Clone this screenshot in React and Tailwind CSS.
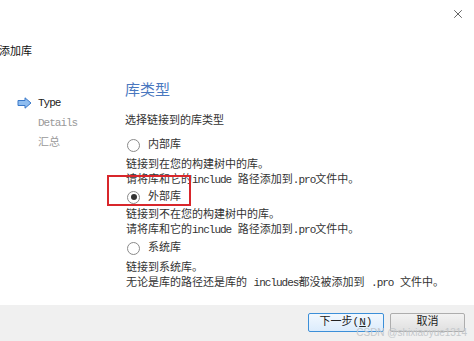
import { X } from 'lucide-react'

const font = { fontFamily: '"Liberation Mono", "Noto Sans CJK SC", monospace' }

// Latin runs in the reference are half-width (SimSun style), so squeeze the mono a little
function Latin({ children }) {
  return <span className="tracking-[-1px]">{children}</span>
}

function Radio({ checked, label }) {
  return (
    <div className="flex h-[16px] items-center gap-[8px]">
      <span className="ml-[2px] flex h-[13px] w-[13px] items-center justify-center rounded-full border border-[#8a8a8a] bg-white">
        {checked && <span className="h-[6px] w-[6px] rounded-full bg-[#333]" />}
      </span>
      <span className="text-[11px] text-[#333]">{label}</span>
    </div>
  )
}

function NavArrow() {
  return (
    <svg width="15" height="12" viewBox="0 0 15 12" className="shrink-0">
      <path d="M1 3.5 H8 V0.8 L14 6 L8 11.2 V8.5 H1 Z" fill="#8fbdf0" stroke="#3a78c8" strokeWidth="1" strokeLinejoin="round" />
    </svg>
  )
}

export default function App() {
  return (
    <div className="relative flex h-[341px] w-[474px] flex-col overflow-hidden bg-white" style={font}>
      <div className="flex h-[30px] justify-end pr-[9px] pt-[7px]">
        <X size={14} strokeWidth={1.3} className="text-[#333]" />
      </div>
      <div className="-ml-[1px] mt-[15px] h-[14px] text-[11px] leading-[14px] text-[#111]">添加库</div>

      <div className="flex flex-1 pt-[33px]">
        <div className="w-[125px] shrink-0 pl-[17px] pt-[1px] text-[11px] leading-[20px]">
          <div className="flex items-center gap-[6px] text-[#222]">
            <NavArrow />
            <Latin>Type</Latin>
          </div>
          <div className="pl-[21px] text-[#9a9a9a]"><Latin>Details</Latin></div>
          <div className="pl-[21px] text-[#9a9a9a]">汇总</div>
        </div>

        <div className="-mt-[10px] flex-1 text-[11px] leading-[15px] text-[#333]">
          <div className="h-[20px] text-[15px] leading-[20px] text-[#4a78bf]">库类型</div>
          <div className="mt-[12px]">选择链接到的库类型</div>

          <div className="mt-[8px]">
            <Radio label="内部库" />
          </div>
          <div className="mt-[5px] pl-[1px]">
            <div>链接到在您的构建树中的库。</div>
            <div>请将库和它的<Latin>include</Latin> 路径添加到<Latin>.pro</Latin>文件中。</div>
          </div>

          <div className="relative mt-[1px]">
            <Radio checked label="外部库" />
            <div className="absolute -left-[18px] -top-[14px] h-[31px] w-[84px] border-2 border-[#d8262b]" />
          </div>
          <div className="mt-[3px] pl-[1px]">
            <div>链接到不在您的构建树中的库。</div>
            <div>请将库和它的<Latin>include</Latin> 路径添加到<Latin>.pro</Latin>文件中。</div>
          </div>

          <div className="mt-[2px]">
            <Radio label="系统库" />
          </div>
          <div className="mt-[5px] pl-[1px]">
            <div>链接到系统库。</div>
            <div>无论是库的路径还是库的 <Latin>includes</Latin>都没被添加到 <Latin>.pro</Latin> 文件中。</div>
          </div>
        </div>
      </div>

      <div className="flex h-[36px] shrink-0 items-start justify-end gap-[6px] bg-[#f0f0f0] pr-[9px] pt-[8px]">
        <button className="h-[19px] w-[76px] rounded-[2px] border border-[#3c8fd8] bg-gradient-to-b from-[#f2f8fe] to-[#dcecfc] text-[11px] leading-[17px] text-[#222]">
          下一步(<span className="underline">N</span>)
        </button>
        <button className="h-[19px] w-[75px] rounded-[2px] border border-[#adadad] bg-gradient-to-b from-[#f2f2f2] to-[#e0e0e0] text-[11px] leading-[17px] text-[#222]">
          取消
        </button>
      </div>

      <div
        className="pointer-events-none absolute bottom-[2px] right-[7px] text-[10px] leading-[12px] text-[#c4c8cc]"
        style={{ fontFamily: '"Liberation Sans", sans-serif' }}
      >
        CSDN @shixiaoyue1314
      </div>
    </div>
  )
}
